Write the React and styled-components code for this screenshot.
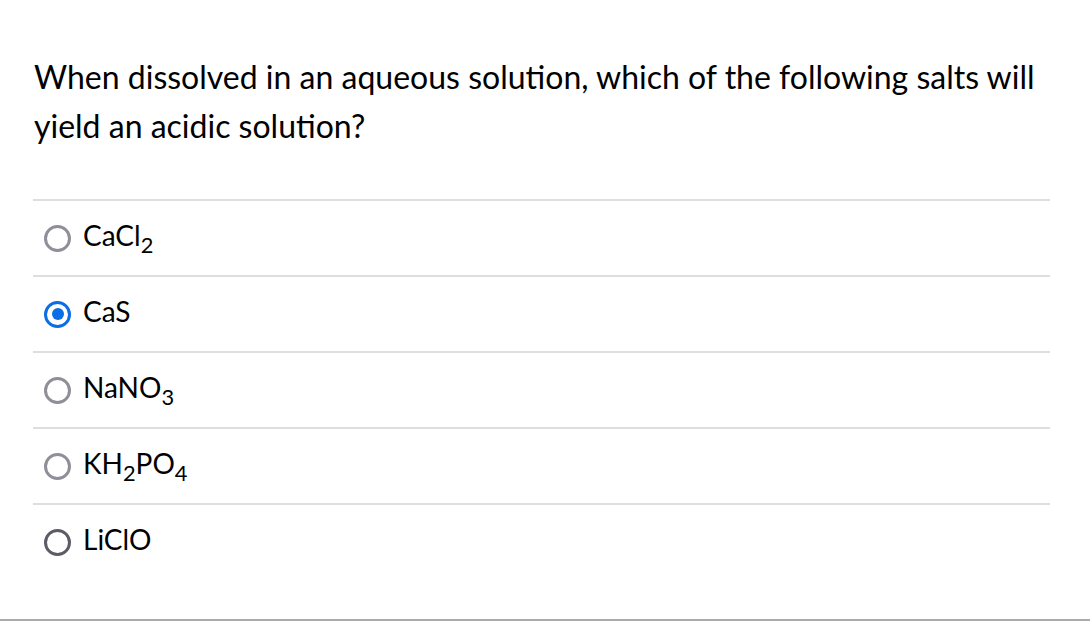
import React, { useState } from "react";
import styled, { createGlobalStyle } from "styled-components";

const GlobalStyle = createGlobalStyle`
  html, body {
    margin: 0;
    padding: 0;
    background: #fff;
  }
  body {
    font-family: Lato, "Open Sans", sans-serif;
    color: #000;
  }
`;

const options = [
  { id: "a", label: ["CaCl", { sub: "2" }] },
  { id: "b", label: ["CaS"] },
  { id: "c", label: ["NaNO", { sub: "3" }] },
  { id: "d", label: ["KH", { sub: "2" }, "PO", { sub: "4" }] },
  { id: "e", label: ["LiClO"] },
];

const App = () => {
  const [picked, setPicked] = useState("b");

  return (
    <>
      <GlobalStyle />
      <Page>
        <Question>
          When dissolved in an aqueous solution, which of the following salts
          will yield an acidic solution?
        </Question>
        <OptionList>
          {options.map((opt) => (
            <OptionRow key={opt.id} onClick={() => setPicked(opt.id)}>
              <Radio checked={picked === opt.id} dark={opt.id === "e"} />
              <OptionText>
                {opt.label.map((part, i) =>
                  typeof part === "string" ? (
                    <span key={i}>{part}</span>
                  ) : (
                    <Sub key={i}>{part.sub}</Sub>
                  )
                )}
              </OptionText>
            </OptionRow>
          ))}
        </OptionList>
      </Page>
      <BottomRule />
    </>
  );
};

const Page = styled.div`
  padding: 52px 40px 0 33px;
  height: 564px;
  box-sizing: border-box;
`;

const Question = styled.p`
  margin: 0 0 49px 1px;
  font-size: 32px;
  line-height: 49px;
  max-width: 1012px;
`;

const OptionList = styled.div`
  border-top: 2px solid #dedede;
`;

const OptionRow = styled.div`
  display: flex;
  align-items: center;
  height: 74px;
  padding-left: 11px;
  border-bottom: 2px solid #dedede;
  cursor: pointer;

  &:last-child {
    border-bottom: none;
  }
`;

const Radio = styled.span`
  width: 27px;
  height: 27px;
  box-sizing: border-box;
  border-radius: 50%;
  border: 3.5px solid
    ${(p) => (p.checked ? "#0a6ee6" : p.dark ? "#5c5c66" : "#8f8f99")};
  display: flex;
  align-items: center;
  justify-content: center;
  flex-shrink: 0;
  margin-right: 12px;

  &::after {
    content: "";
    width: 12px;
    height: 12px;
    border-radius: 50%;
    background: #0a6ee6;
    display: ${(p) => (p.checked ? "block" : "none")};
  }
`;

const OptionText = styled.span`
  font-size: 28px;
  line-height: 32px;
  margin-bottom: 6px;
`;

const Sub = styled.sub`
  font-size: 0.78em;
  vertical-align: -0.3em;
  line-height: 0;
`;

const BottomRule = styled.div`
  height: 2px;
  background: #aaa;
  margin-top: 55px;
`;

export default App;
